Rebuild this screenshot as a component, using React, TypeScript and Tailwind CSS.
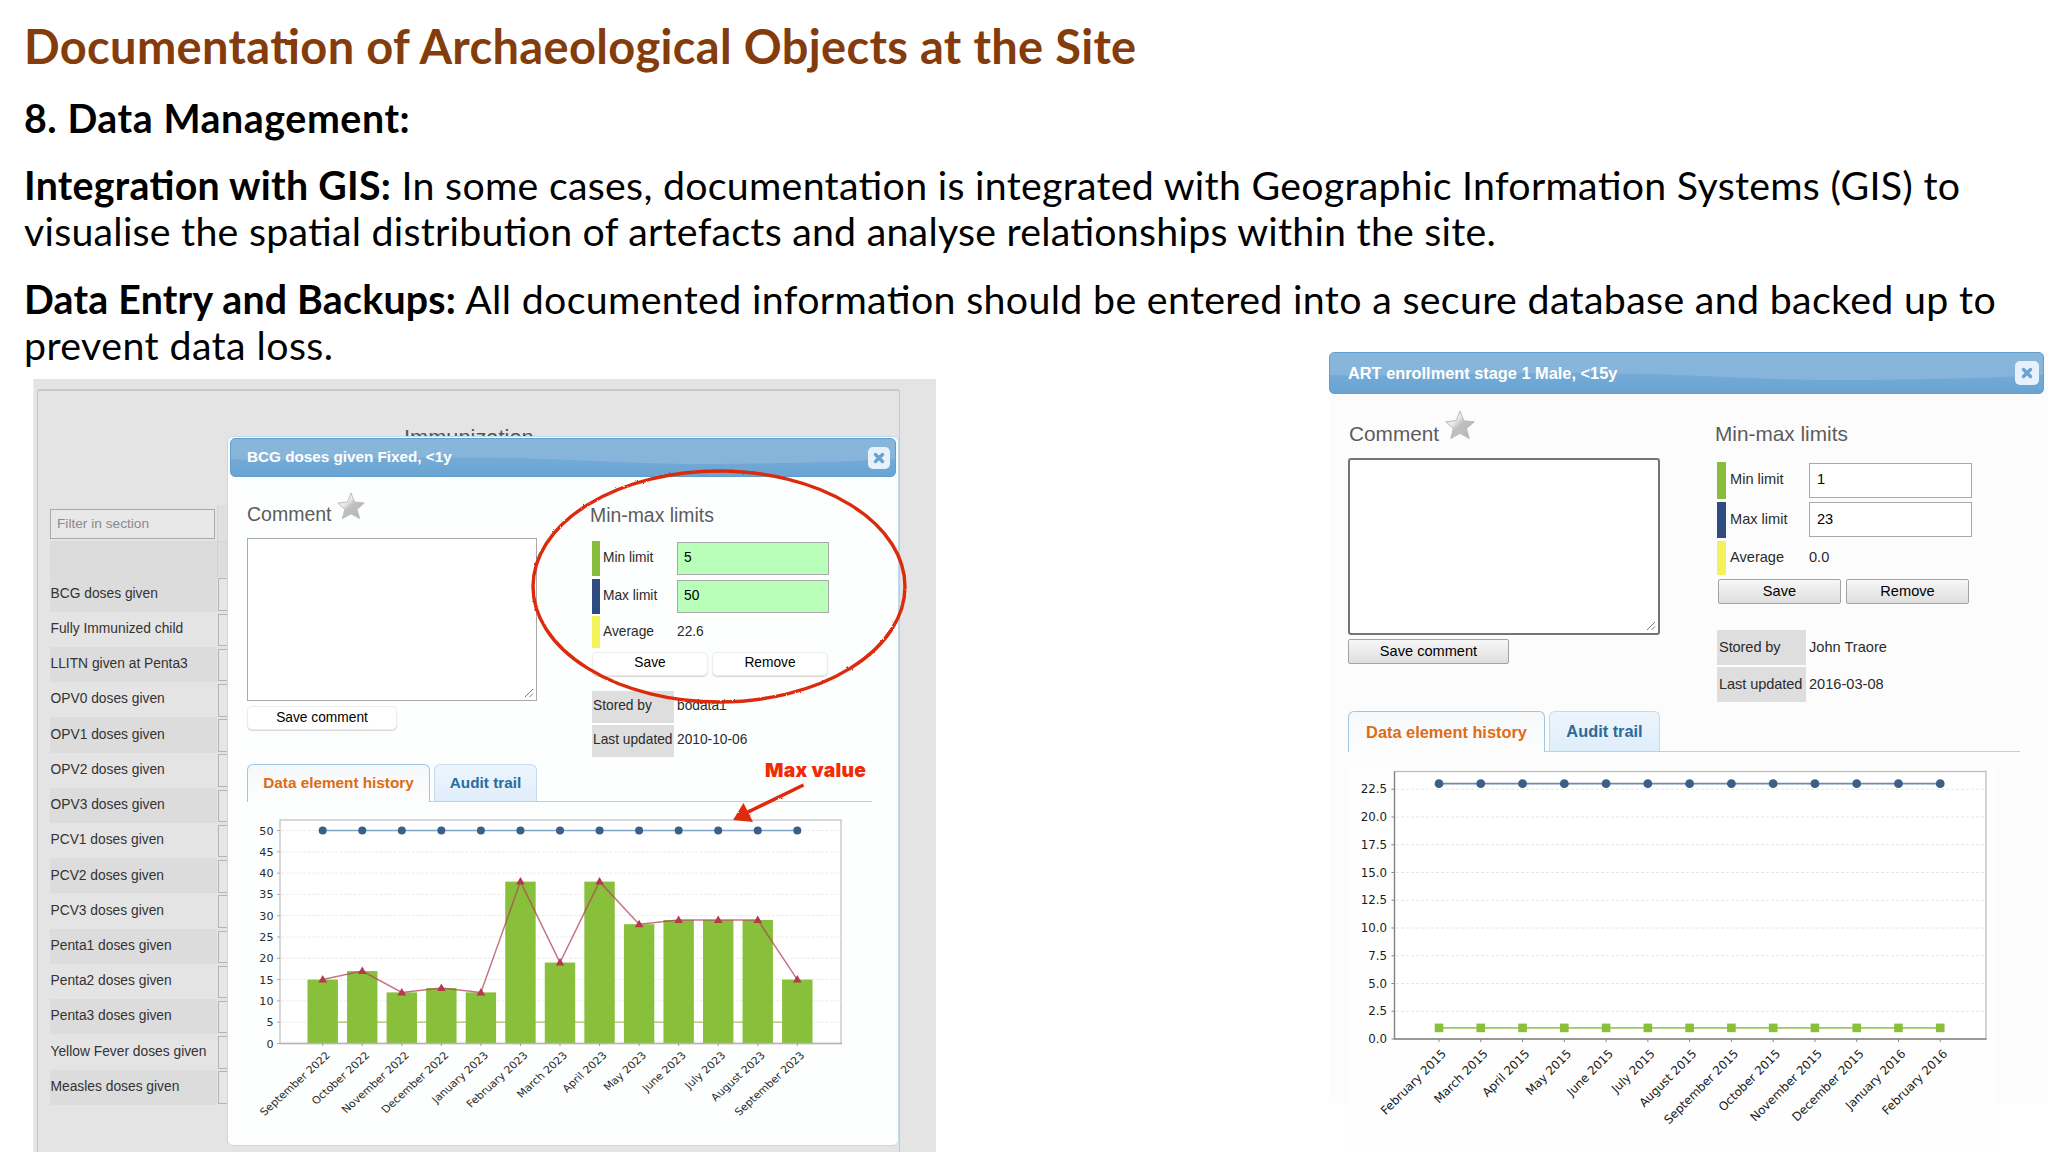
import clsx from "clsx";

const sectionRows = [
  "BCG doses given",
  "Fully Immunized child",
  "LLITN given at Penta3",
  "OPV0 doses given",
  "OPV1 doses given",
  "OPV2 doses given",
  "OPV3 doses given",
  "PCV1 doses given",
  "PCV2 doses given",
  "PCV3 doses given",
  "Penta1 doses given",
  "Penta2 doses given",
  "Penta3 doses given",
  "Yellow Fever doses given",
  "Measles doses given",
];

const bcgHistory = [
  { label: "September 2022", value: 15 },
  { label: "October 2022", value: 17 },
  { label: "November 2022", value: 12 },
  { label: "December 2022", value: 13 },
  { label: "January 2023", value: 12 },
  { label: "February 2023", value: 38 },
  { label: "March 2023", value: 19 },
  { label: "April 2023", value: 38 },
  { label: "May 2023", value: 28 },
  { label: "June 2023", value: 29 },
  { label: "July 2023", value: 29 },
  { label: "August 2023", value: 29 },
  { label: "September 2023", value: 15 },
];

const artMonths = [
  "February 2015",
  "March 2015",
  "April 2015",
  "May 2015",
  "June 2015",
  "July 2015",
  "August 2015",
  "September 2015",
  "October 2015",
  "November 2015",
  "December 2015",
  "January 2016",
  "February 2016",
];

const swatches = ["bg-[#8abc3c]", "bg-[#2f4b80]", "bg-[#f2f25a]"];

// "ti" joined by the crossbar, as in the slide typeface
function Ti({ bold }: { bold?: boolean }) {
  return (
    <span className="relative">
      ti
      <span
        className={clsx(
          "absolute right-[0.08em] w-[0.24em]",
          bold ? "top-[0.47em] h-[0.1em]" : "top-[0.475em] h-[0.07em]",
          "bg-current"
        )}
      />
    </span>
  );
}

function Star({ className }: { className: string }) {
  return (
    <svg viewBox="0 0 28 28" className={className}>
      <defs>
        <linearGradient id="star" x1="0" y1="0" x2="1" y2="1">
          <stop offset="0" stopColor="#e0e0e0" />
          <stop offset="0.35" stopColor="#ececec" />
          <stop offset="0.5" stopColor="#c0c0c0" />
          <stop offset="1" stopColor="#b4b4b4" />
        </linearGradient>
      </defs>
      <path
        d="M14 1 L17.6 10 L27.3 11 L20 17.4 L22.7 26.6 L14 21.8 L5.4 26.6 L7.8 17.4 L0.7 11 L10.4 10 Z"
        fill="url(#star)"
        stroke="#b9b9b9"
        strokeWidth="0.9"
        strokeLinejoin="round"
      />
    </svg>
  );
}

type DialogProps = {
  wide?: boolean;
  title: string;
  min: string;
  max: string;
  average: string;
  storedBy: string;
  updated: string;
  children: React.ReactNode;
};

function Dialog({ wide, title, min, max, average, storedBy, updated, children }: DialogProps) {
  const button = clsx(
    "flex items-center justify-center text-black",
    wide
      ? "h-[25px] rounded-[2px] border border-[#a3a3a3] bg-linear-to-b from-[#f7f7f7] to-[#dedede]"
      : "h-6 rounded-[5px] border border-[#ececec] bg-white shadow-[0_1px_1px_#d8d8d8]"
  );
  const field = clsx(
    "flex items-center border text-black",
    wide ? "h-[35px] w-[163px] border-[#a9a9a9] bg-white pl-[7px]" : "h-[33px] w-[152px] border-[#a9a9a9] bg-[#b9ffb9] pl-1.5"
  );
  const label = wide ? "w-[83px] pl-1" : "w-[77px] pl-[3px]";
  const swatch = wide ? "w-[9px]" : "w-2";
  const meta = clsx("flex items-center bg-[#dedede]", wide ? "w-[89px] pl-[2px] tracking-[-0.1px]" : "w-[82px] pl-px");

  return (
    <div className={clsx("font-['Liberation_Sans',sans-serif] text-[#2b2b2b] whitespace-nowrap", wide ? "text-[14.6px]" : "text-[13.75px]")}>
      {/* Title bar */}
      <div
        className={clsx(
          "relative flex items-center justify-between overflow-hidden rounded-[5px] border border-[#5fa0d0] bg-linear-to-b from-[#7fb0d9] to-[#6aa4d2] font-bold text-white",
          wide ? "h-[42px] w-[715px] pl-[18px] pr-1 text-[16.35px]" : "mx-0.5 mt-px h-[39px] w-[666px] pl-4 pr-[5px] text-[15.25px]"
        )}
      >
        <svg viewBox="0 0 700 40" preserveAspectRatio="none" className="absolute inset-0 h-full w-full">
          <path d="M0 0 H700 V22 C640 25 580 27 480 27 C400 26 340 20 240 20 C140 20 80 24 0 22 Z" fill="#8bb6da" fillOpacity="0.85" />
        </svg>
        <span className="relative">{title}</span>
        <span className={clsx("relative flex items-center justify-center rounded-[5px] bg-[#e6f1fb]", wide ? "size-6" : "size-[22px]")}>
          <svg viewBox="0 0 12 12" className="size-3">
            <path d="M2.5 2.5 L9.5 9.5 M9.5 2.5 L2.5 9.5" stroke="#6aa3d0" strokeWidth="3.4" strokeLinecap="round" />
          </svg>
        </span>
      </div>

      <div className={clsx("flex", wide ? "h-[317px] pl-[19px]" : "h-[287px] pl-[19px]")}>
        {/* Comment */}
        <div className={wide ? "w-[367px]" : "w-[345px]"}>
          <div className={clsx("flex text-[#5c5c5c]", wide ? "h-[64px] gap-1.5 pl-px pt-[16px] text-[20.8px] leading-[48px]" : "h-[61px] gap-1 pt-[13px] text-[19.5px] leading-[48px]")}>
            Comment
            <Star className={wide ? "size-[30px]" : "mt-0.5 ml-px size-7"} />
          </div>
          <div
            className={clsx(
              "flex items-end justify-end bg-white",
              wide ? "h-[177px] w-[312px] rounded-[3px] border-2 border-[#747474]" : "h-[163px] w-[290px] border border-[#a9a9a9]"
            )}
          >
            <svg viewBox="0 0 10 10" className="m-0.5 size-2.5">
              <path d="M1 9 L9 1 M5.5 9 L9 5.5" stroke="#777" strokeWidth="1" />
            </svg>
          </div>
          <div className={clsx(button, wide ? "mt-1 w-[161px]" : "mt-[5px] w-[150px]")}>Save comment</div>
        </div>

        {/* Limits */}
        <div>
          <div className={clsx("text-[#5c5c5c] leading-[48px]", wide ? "h-[68px] pt-4 text-[20.8px]" : "h-[64px] -ml-1 pt-[13.5px] text-[19.4px]")}>
            <span className={wide ? "" : "ml-0.5"}>Min-max limits</span>
          </div>
          <div className={clsx("flex flex-col", wide ? "ml-0.5 gap-[3px]" : "gap-[2.5px]")}>
            {[min, max].map((limit, i) => (
              <div key={i} className={clsx("flex items-center", wide ? "h-[36.5px]" : "h-[35px]")}>
                <span className={clsx("h-full", swatch, swatches[i])} />
                <span className={label}>{i === 0 ? "Min limit" : "Max limit"}</span>
                <span className={field}>{limit}</span>
              </div>
            ))}
            <div className={clsx("flex items-center", wide ? "h-[34px]" : "h-8")}>
              <span className={clsx("h-full", swatch, swatches[2])} />
              <span className={label}>Average</span>
              <span>{average}</span>
            </div>
          </div>
          <div className={clsx("flex", wide ? "mt-1 ml-[3px] gap-[5px]" : "mt-[3.5px] gap-1")}>
            <div className={clsx(button, wide ? "w-[123px]" : "w-[116px]")}>Save</div>
            <div className={clsx(button, wide ? "w-[123px]" : "w-[116px]")}>Remove</div>
          </div>
          <div className={clsx("flex flex-col gap-[2px]", wide ? "mt-[26px] ml-0.5" : "mt-[15px]")}>
            <div className={clsx("flex", wide ? "h-[35px] gap-[3px]" : "h-8 gap-[3px]")}>
              <span className={meta}>Stored by</span>
              <span className="flex items-center">{storedBy}</span>
            </div>
            <div className={clsx("flex", wide ? "h-[35px] gap-[3px]" : "h-8 gap-[3px]")}>
              <span className={meta}>Last updated</span>
              <span className="flex items-center">{updated}</span>
            </div>
          </div>
        </div>
      </div>

      {/* Tabs */}
      <div
        className={clsx(
          "flex border-b border-[#b9d3e6] font-bold",
          wide ? "ml-[19px] h-[41px] w-[672px] gap-1 text-[16.35px]" : "ml-[19px] h-[38px] w-[625px] gap-1 text-[15.3px]"
        )}
      >
        <div
          className={clsx(
            "flex items-center justify-center rounded-t-[6px] border border-b-0 border-[#9cc6e2] bg-linear-to-b from-[#f5f8fa] to-[#fdfdfd] text-[#dd6c15]",
            wide ? "h-[41px] w-[197px]" : "h-[38px] w-[183px]"
          )}
        >
          Data element history
        </div>
        <div
          className={clsx(
            "flex items-center justify-center rounded-t-[6px] border border-b-0 border-[#c5dbec] bg-linear-to-b from-[#edf5fd] to-[#dfeefb] text-[#2c6b9b]",
            wide ? "h-10 w-[111px]" : "h-[37px] w-[103px]"
          )}
        >
          Audit trail
        </div>
      </div>
      {children}
    </div>
  );
}

function BcgChart() {
  const x = (i: number) => 322.7 + i * 39.55;
  const y = (v: number) => 1043.5 - v * 4.26;
  const ticks = [0, 5, 10, 15, 20, 25, 30, 35, 40, 45, 50];
  return (
    <svg viewBox="228 802 670 340" className="h-[340px] w-[670px] font-['DejaVu_Sans',sans-serif] text-[11.15px]" fill="#2b2b2b">
      <rect x="280" y="820" width="561" height="223.5" fill="#fff" stroke="#c4c4c8" strokeWidth="1.3" />
      {ticks.map((t) => (
        <g key={t}>
          {t > 0 && <line x1="281" x2="841" y1={y(t)} y2={y(t)} stroke="#ececec" strokeDasharray="3 1.5" />}
          <line x1="277" x2="280" y1={y(t)} y2={y(t)} stroke="#aaa" />
          <text transform={`translate(273.5 ${y(t) + 4}) scale(1 0.92)`} textAnchor="end">
            {t}
          </text>
        </g>
      ))}
      <line x1={x(0)} x2={x(12)} y1={y(5)} y2={y(5)} stroke="#a3c46c" strokeWidth="1.3" />
      {bcgHistory.map((m, i) => (
        <rect key={i} x={x(i) - 15.2} y={y(m.value)} width="30.4" height={m.value * 4.26} fill="#88bf3b" />
      ))}
      <line x1="279" x2="842" y1="1043.5" y2="1043.5" stroke="#b5b5b5" strokeWidth="1.3" />
      <line x1={x(0)} x2={x(12)} y1={y(50)} y2={y(50)} stroke="#7fa3c0" strokeWidth="1.5" />
      <polyline points={bcgHistory.map((m, i) => `${x(i)},${y(m.value)}`).join(" ")} fill="none" stroke="#b4455a" strokeOpacity="0.75" strokeWidth="1.5" />
      {bcgHistory.map((m, i) => (
        <g key={i}>
          <circle cx={x(i)} cy={y(50)} r="4" fill="#3b5f88" />
          <path d={`M${x(i)} ${y(m.value) - 4.5} l4.3 7.5 h-8.6 Z`} fill="#b5384c" />
          <line x1={x(i)} x2={x(i)} y1="1043.5" y2="1046" stroke="#999" />
          <text transform={`translate(${x(i) + 8} 1056) scale(1 0.91) rotate(-45)`} textAnchor="end">
            {m.label}
          </text>
        </g>
      ))}
    </svg>
  );
}

function ArtChart() {
  const x = (i: number) => 1439 + i * 41.77;
  const y = (v: number) => 1039 - v * 11.1;
  const ticks = [0, 2.5, 5, 7.5, 10, 12.5, 15, 17.5, 20, 22.5];
  return (
    <svg viewBox="1329 752 719 400" className="h-[400px] w-[719px] font-['DejaVu_Sans',sans-serif] text-[11.85px]" fill="#1c1c1c">
      <rect x="1348" y="768" width="648" height="384" fill="#fefefe" />
      <rect x="1394.5" y="771.5" width="591.5" height="267.5" fill="#fff" stroke="#bdbdbd" strokeWidth="1.3" />
      {ticks.map((t) => (
        <g key={t}>
          {t > 0 && <line x1="1396" x2="1985" y1={y(t)} y2={y(t)} stroke="#e6e6e6" strokeDasharray="3 2" />}
          <line x1="1391.5" x2="1394.5" y1={y(t)} y2={y(t)} stroke="#888" />
          <text x="1387" y={y(t) + 4.2} textAnchor="end">
            {t.toFixed(1)}
          </text>
        </g>
      ))}
      <path d="M1394.5 771.5 V1039 H1986.5" fill="none" stroke="#858585" strokeWidth="1.3" />
      <line x1={x(0)} x2={x(12)} y1={y(23)} y2={y(23)} stroke="#7189ab" strokeWidth="1.7" />
      <line x1={x(0)} x2={x(12)} y1={y(1)} y2={y(1)} stroke="#9cc95b" strokeWidth="1.7" />
      {artMonths.map((m, i) => (
        <g key={m}>
          <circle cx={x(i)} cy={y(23)} r="4.4" fill="#3c5f88" />
          <rect x={x(i) - 4.3} y={y(1) - 4.3} width="8.6" height="8.6" fill="#88bf3b" />
          <line x1={x(i)} x2={x(i)} y1="1039" y2="1042" stroke="#888" />
          <text transform={`translate(${x(i) + 7.8} 1054.5) rotate(-45)`} textAnchor="end">
            {m}
          </text>
        </g>
      ))}
    </svg>
  );
}

export default function App() {
  return (
    <div className="relative h-[1152px] w-[2048px] overflow-hidden bg-white">
      {/* Slide text */}
      <header className="h-[350px] pl-6 pt-[19px] font-['Lato',sans-serif] text-[39.3px] leading-[46px] text-black whitespace-nowrap">
        <h1 className="text-[47px] leading-[54px] font-bold tracking-[0.33px] text-[#843c0c]">
          Documenta<Ti bold />on of Archaeological Objects at the Site
        </h1>
        <h2 className="mt-[22px] font-bold tracking-[0.57px]">8. Data Management:</h2>
        <p className="mt-[21px] tracking-[0.28px]">
          <b>
            Integra<Ti bold />on with GIS:
          </b>{" "}
          In some cases, documenta<Ti />on is integrated with Geographic Informa<Ti />on Systems (GIS) to
          <br />
          <span className="tracking-[0.24px]">
            visualise the spa<Ti />al distribu<Ti />on of artefacts and analyse rela<Ti />onships within the site.
          </span>
        </p>
        <p className="mt-[21.5px] tracking-[0.34px]">
          <b className="tracking-[0.22px]">Data Entry and Backups:</b> All documented informa<Ti />on should be entered into a secure database and backed up to
          <br />
          <span className="tracking-[0.42px]">prevent data loss.</span>
        </p>
      </header>

      <main className="flex items-start justify-between">
        {/* Data entry form with the dialog on top */}
        <section className="relative mt-[29px] ml-[33px] h-[773px] w-[903px] border-l border-[#ececec] bg-[#e4e4e4] pt-[10px] pl-[3px] font-['Liberation_Sans',sans-serif]">
          <div className="h-[780px] w-[863px] rounded-t-[3px] border-t-2 border-r border-l border-[#c9c9c9] pl-3">
            <h3 className="h-[118px] pt-[32px] pl-[354px] text-[21.8px] leading-[30px] text-[#555]">Immunization</h3>
            <div className="flex">
              <div className="w-[167px]">
                <div className="mb-0.5 flex h-[30px] w-[165px] items-center border border-[#aaa] bg-[#e8e8e8] pl-1.5 text-[13.7px] text-[#8a8a8a]">
                  Filter in section
                </div>
                <div className="h-[35.5px] bg-[#dbdbdb]" />
                {sectionRows.map((row, i) => (
                  <div
                    key={row}
                    className={clsx("flex h-[35.23px] items-center pl-[0.5px] text-[13.8px] text-[#333]", i % 2 === 0 && "bg-[#dcdcdc]")}
                  >
                    {row}
                  </div>
                ))}
              </div>
              <div className="w-3">
                <div className="-mt-1 h-[37px] border-l border-b border-[#d6d6d6] bg-[#dfdfdf]" />
                <div className="h-[35px] border-l border-[#d0d0d0] bg-[#dddddd]" />
                {sectionRows.map((row) => (
                  <div key={row} className="flex h-[35.23px] items-center">
                    <div className="ml-px h-[32.5px] w-6 border border-[#b5b5b5] bg-[#e6e6e6]" />
                  </div>
                ))}
              </div>
            </div>
          </div>

          <div className="absolute top-[57px] left-[193px] h-[710px] w-[672px] rounded-[6px] border border-[#bfdcec] bg-[#fdfefe]">
            <Dialog title="BCG doses given Fixed, <1y" min="5" max="50" average="22.6" storedBy="bodata1" updated="2010-10-06">
              <BcgChart />
            </Dialog>
          </div>

          {/* Red annotations */}
          <svg viewBox="520 450 400 390" className="absolute top-[71px] left-[486px] h-[390px] w-[400px]">
            <defs>
              <filter id="rough">
                <feTurbulence type="fractalNoise" baseFrequency="0.35" numOctaves="2" seed="4" />
                <feDisplacementMap in="SourceGraphic" scale="2" />
              </filter>
            </defs>
            <g filter="url(#rough)">
              <ellipse cx="719" cy="586.5" rx="186" ry="115.5" fill="none" stroke="#dc2c10" strokeWidth="3.4" />
              <path d="M803.5 785 L745 813.5" stroke="#e02a0a" strokeWidth="3.6" />
              <path d="M733 820 L743.5 803 L753 822 Z" fill="#e02a0a" />
            </g>
            <text x="765" y="777" textLength="101" className="font-['Inter',sans-serif] text-[19.3px] font-black" fill="#f12c02">
              Max value
            </text>
          </svg>
        </section>

        {/* ART dialog */}
        <section className="h-[753px] w-[719px] bg-[#fcfcfc]">
          <div className="h-0.5 bg-white" />
          <Dialog wide title="ART enrollment stage 1 Male, <15y" min="1" max="23" average="0.0" storedBy="John Traore" updated="2016-03-08">
            <ArtChart />
          </Dialog>
        </section>
      </main>
    </div>
  );
}
